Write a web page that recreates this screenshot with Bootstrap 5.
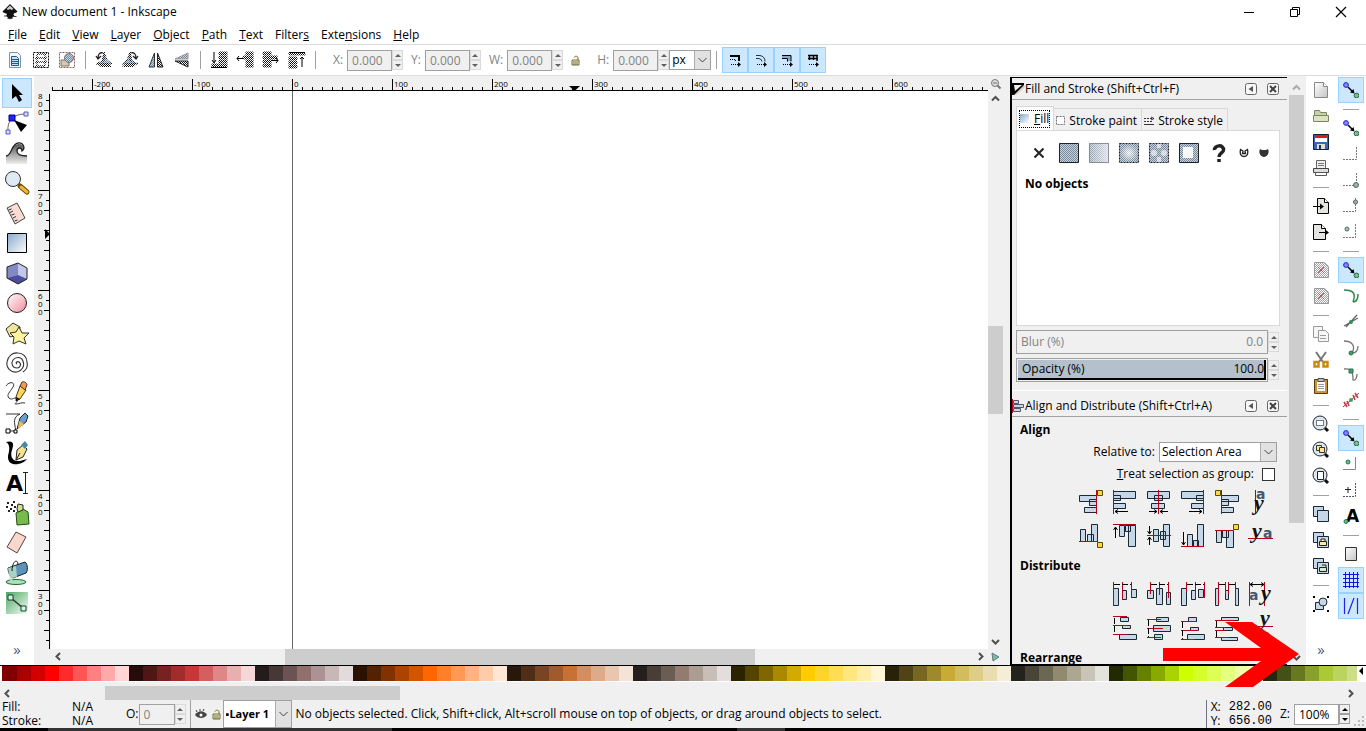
<!DOCTYPE html>
<html lang="en">
<head>
<meta charset="utf-8">
<meta name="viewport" content="width=device-width, initial-scale=1">
<title>New document 1 - Inkscape</title>
<link href="https://cdn.jsdelivr.net/npm/bootstrap@5.3.0/dist/css/bootstrap.min.css" rel="stylesheet">
<style>
  :root { --face: #f0f0f0; --edge: #a0a0a0; --thumb: #cdcdcd; --hot: #cce8ff; --hot-edge: #99d1ff; }
  body { font-family: "Open Sans", "Noto Sans", sans-serif; font-size: 12px; line-height: 16px; color: #000; background: #fff; }
  button { font: inherit; color: inherit; background: none; border: 0; padding: 0; }
  svg { display: block; flex: none; overflow: visible; }
  a { color: inherit; text-decoration: none; }
  .titlebar { height: 24px; padding-left: 2px; flex: none; }
  .win-controls { width: 134px; padding: 0 20px 0 12px; }
  .menus { height: 21px; gap: 12px; border-bottom: 1px solid #dcdcdc; padding-top: 1px; flex: none; }
  .toolbar-row { height: 31px; border-bottom: 1px solid #dcdcdc; padding-left: 2px; flex: none; }
  .tb { width: 26px; height: 26px; display: flex; align-items: center; justify-content: center; flex: none; }
  .tb.on, .tool.on { background: var(--hot); outline: 1px solid var(--hot-edge); outline-offset: -1px; }
  .vsep { width: 1px; height: 18px; background: var(--edge); margin: 0 5px; flex: none; }
  .hsep { height: 1px; width: 16px; background: var(--edge); margin: 6px 0 5px; flex: none; }
  .toolbox { width: 34px; flex: none; padding-top: 2px; }
  .tool { width: 30px; height: 30px; display: flex; align-items: center; justify-content: center; flex: none; }
  .num { width: 45px; height: 21px; border: 1px solid var(--edge); background: #fff; padding: 0 4px; font-size: 12px; line-height: 16px; border-radius: 0; color: #000; }
  .num:disabled { background: var(--face); color: #838383; }
  .num.opacity-field { width: 36px; }
  .spin { display: flex; flex-direction: column; width: 11px; flex: none; }
  .spin button { height: 10px; width: 11px; border: 1px solid #dadada; background: var(--face); display: flex; align-items: center; justify-content: center; }
  .spin button::before { content: ""; border: 3px solid transparent; border-top: 0; border-bottom: 3px solid #606060; }
  .spin button:last-child::before { transform: rotate(180deg); }
  .spin.live button { border-color: var(--edge); }
  .spin.live button::before { border-bottom-color: #000; }
  .dim { color: #838383; }
  .combo { appearance: none; border: 1px solid var(--edge); border-radius: 0; font-size: 12px; line-height: 16px; height: 20px; padding: 0 18px 0 2px; color: #000;
    background: #fff url("data:image/svg+xml,%3Csvg xmlns='http://www.w3.org/2000/svg' width='16' height='30'%3E%3Cpath fill='%23e1e1e1' stroke='%23adadad' d='M.5 -1h16v32h-16z'/%3E%3Cpath fill='none' stroke='%23444' d='M4.500 13l4 4 4-4'/%3E%3C/svg%3E") right center no-repeat; }
  .combo.units { width: 42px; }
  .combo.relative-to { width: 118px; }
  .combo.layer { width: 69px; height: 28px; font-size: 11px; }
  .workspace { min-height: 0; }
  .sheet { display: grid; grid-template: 15px minmax(0, 1fr) 16px / 17px minmax(0, 1fr) 15px; background: var(--face); min-width: 0; }
  .sheet text { font-size: 8px; }
  .sheet > svg { overflow: hidden; }
  .paper { background: #fff; overflow: hidden; }
  .page-edge { width: 242px; height: 100%; border-right: 1px solid #666; }
  .bar { display: flex; background: var(--face); }
  .bar-v { flex-direction: column; width: 15px; flex: none; }
  .bar button { width: 15px; height: 15px; flex: none; display: flex; align-items: center; justify-content: center; }
  .bar i { background: var(--thumb); }
  .dock { width: 303px; flex: none; background: var(--face); padding-left: 7px; gap: 2px; }
  .dock-panel { width: 277px; border: solid #000; border-width: 1px 0 1px 2px; overflow: hidden; margin-top: 1px; flex: none; }
  .dock-head { height: 22px; border-bottom: 1px solid var(--edge); padding: 1px 8px 0 0; gap: 10px; }
  .tabs { height: 22px; padding-left: 4px; }
  .tabs button { border: 1px solid #d9d9d9; border-bottom: 0; border-left: 0; height: 22px; display: flex; align-items: center; gap: 4px; padding: 2px 4px 0 2px; }
  .tabs .active { background: #fff; height: 24px; border-left: 1px solid #d9d9d9; padding: 0 4px 0 3px; }
  .focus-dots { outline: 1px dotted #000; }
  .tab-page { background: #fff; border: 1px solid #d9d9d9; height: 196px; margin: 0 7px 0 4px; }
  .paints { padding: 7px 0 0 7px; }
  .paint { width: 30px; height: 30px; display: flex; align-items: center; justify-content: center; }
  .paint.slim { width: 20px; }
  .meter-row { margin: 4px 8px 0 4px; }
  .meter { border: 1px solid var(--edge); height: 24px; flex: 1; display: flex; align-items: center; justify-content: space-between; }
  .meter.full { padding: 1px; }
  .meter.full > div { background: #b4c0cb; border: solid #000; border-width: 0 2px 2px 0; height: 20px; }
  .meter input { width: 50px; text-align: right; border: 0; background: none; padding: 0; font-size: 12px; color: inherit; }
  .form-line { height: 22px; padding-right: 10px; }
  .form-line.tick-line { padding-right: 12px; }
  .grid-btns { display: grid; grid-template-columns: repeat(6, 34px); justify-content: end; padding-right: 10px; }
  .grid-btns button { height: 34px; display: flex; align-items: center; justify-content: center; }
  .grid-btns.five { grid-template-columns: repeat(5, 34px); }
  .section-name { font-weight: 700; padding: 5px 0 3px 8px; }
  .tick-box { appearance: none; width: 13px; height: 13px; border: 1px solid #333; background: #fff; }
  .o { fill: #c6d8e8; stroke: #1b2733; }
  .r { stroke: #b8001c; fill: none; }
  .k { stroke: #000; fill: none; }
  .y { fill: #ffd83a; stroke: #5c4a00; }
  .ay { font: bold 14px "DejaVu Sans"; fill: #44586c; }
  .yy { font: italic bold 22px "Liberation Serif"; fill: #111; }
  .commands { width: 31px; flex: none; padding: 1px 3px 0 2px; }
  .snaps { width: 29px; flex: none; padding: 1px 2px 0 1px; }
  .chev { color: #555a80; font-size: 15px; }
  .palette { height: 17px; border-top: 1px solid #000; overflow: hidden; padding-left: 2px; background: #fff; }
  .palette button { width: 14px; height: 15px; flex: none; }
  .palette button:first-child { width: 15px; }
  .palette-bar { height: 18px; padding: 4px 8px 0 0; }
  .status { height: 28px; background: var(--face); padding-left: 2px; }
  .fs-rows { line-height: 14px; }
  .fs-name { width: 70px; }
  .fs-value { width: 54px; }
  .task-edge { height: 3px; background: #000; }
  .task-edge i { background: #333; }
  .mono { font-family: "Liberation Mono", monospace; font-size: 12px; }
  .pointer-arrow { position: absolute; right: 67px; bottom: 44px; pointer-events: none; }
</style>
</head>
<body class="vh-100 overflow-hidden d-flex flex-column position-relative">

<!-- shared patterns and symbols -->
<svg width="0" height="0" class="position-absolute" aria-hidden="true">
  <defs>
    <pattern id="ck" width="2" height="2" patternUnits="userSpaceOnUse"><path d="M0 0h1v1H0zM1 1h1v1H1z" fill="#111"/></pattern>
    <pattern id="ckb" width="2" height="2" patternUnits="userSpaceOnUse"><path fill="#c6d3e0" d="M0 0h2v2H0z"/><path d="M0 0h1v1H0zM1 1h1v1H1z" fill="#78879a"/></pattern>
    <pattern id="ckl" width="2" height="2" patternUnits="userSpaceOnUse"><path fill="#fff" d="M0 0h2v2H0z"/><path d="M0 0h1v1H0zM1 1h1v1H1z" fill="#a3a3a3"/></pattern>
    <pattern id="hticks" x="1" width="10" height="15" patternUnits="userSpaceOnUse"><path d="M0 11h1v4H0z"/></pattern>
    <pattern id="hmajor" x="41" width="100" height="15" patternUnits="userSpaceOnUse"><path d="M0 3h1v12H0z"/></pattern>
    <pattern id="vticks" y="9" width="17" height="20" patternUnits="userSpaceOnUse"><path d="M12 0h4v1h-4zM10 10h6v1h-6z"/></pattern>
    <pattern id="vmajor" y="99" width="17" height="100" patternUnits="userSpaceOnUse"><path d="M4 0h12v1H4z"/></pattern>
    <linearGradient id="gb" x2="1" y2="1"><stop stop-color="#86a9c9"/><stop offset="1" stop-color="#fff"/></linearGradient>
    <linearGradient id="gg" x2="1" y2="1"><stop stop-color="#fff"/><stop offset="1" stop-color="#c4c4c4"/></linearGradient>
    <linearGradient id="gr" x2="1" y2="1"><stop stop-color="#fff"/><stop offset="1" stop-color="#f28a9b"/></linearGradient>
    <linearGradient id="gn" x2="1" y2="1"><stop stop-color="#4fa766"/><stop offset="1" stop-color="#f2fff4"/></linearGradient>
    <linearGradient id="gt" x2="0" y2="1"><stop stop-color="#555"/><stop offset="1" stop-color="#eee"/></linearGradient>
    <linearGradient id="fade" x2="1"><stop stop-color="#fff" stop-opacity="0.200"/><stop offset="1" stop-color="#fff" stop-opacity=".7"/></linearGradient>
    <radialGradient id="glow"><stop stop-color="#fff" stop-opacity=".8"/><stop offset="1" stop-color="#fff" stop-opacity="0"/></radialGradient>
  </defs>
  <symbol id="nodes" viewBox="0 0 16 16"><circle cx="3" cy="3" r="2.400" fill="#88f" stroke="#22c"/><circle cx="13.500" cy="13.500" r="2.400" fill="#7b9" stroke="#286b40"/><path d="M5 5l4.500 4.500" stroke="#000" stroke-width="1.500"/><path d="M11.500 11.500l-1-4.500-3.500 3.500z"/></symbol>
  <symbol id="lock" viewBox="0 0 12 12"><path d="M2 6h7v5H2zM4 3.500c1-2 4-1.500 4 .500v2" fill="#fff7c9" stroke="#6b683f"/><path d="M3 8h5M3 10h5" stroke="#6b683f"/></symbol>
  <symbol id="lens" viewBox="0 0 18 18"><path d="M13 13l3 3" stroke="#111" stroke-width="3"/><circle cx="8" cy="8" r="7" fill="#dce8f3" stroke="#222"/></symbol>
  <symbol id="arr-l" viewBox="0 0 9 9"><path d="M6 1L2.500 4.500 6 8" fill="none" stroke="#505050" stroke-width="2"/></symbol>
  <symbol id="arr-r" viewBox="0 0 9 9"><path d="M3 1l3.500 3.500L3 8" fill="none" stroke="#505050" stroke-width="2"/></symbol>
  <symbol id="arr-u" viewBox="0 0 9 9"><path d="M1 6.500L4.500 3 8 6.500" fill="none" stroke="currentColor" stroke-width="2"/></symbol>
  <symbol id="arr-d" viewBox="0 0 9 9"><path d="M1 3l3.500 3.500L8 3" fill="none" stroke="#505050" stroke-width="2"/></symbol>
  <symbol id="iconify" viewBox="0 0 12 12"><rect x=".5" y=".5" width="11" height="11" rx="2" fill="#f7f7f7" stroke="#666"/><path d="M8 3v6L3.500 6z" fill="#555"/></symbol>
  <symbol id="close" viewBox="0 0 12 12"><rect x=".5" y=".5" width="11" height="11" rx="2" fill="#f7f7f7" stroke="#666"/><path d="M3 3l6 6M9 3l-6 6" stroke="#444" stroke-width="2"/></symbol>
  <symbol id="docx" viewBox="0 0 16 16"><path d="M1.500 .5h10l4 4v11h-14z" fill="url(#ckl)" stroke="#999"/><path d="M5 5l6 6M11 5l-6 6" stroke="#b35560"/></symbol>
</svg>

<header class="titlebar d-flex align-items-center">
  <svg width="16" height="16" viewBox="0 0 16 16"><path d="M8 0l7.500 7.500c-1 2-4 1-4 3l1 1.500-4.500 3.500L4 12l1-2C4 9 1 9 .5 7.500z" fill="#111"/><path d="M8 1.500l3.500 3.500-2 1-1.500-1-2 1-1.500-1z" fill="#c7ced5"/><path d="M2 12h2M11.500 12.500h3M5.500 14.500h5" stroke="#444"/></svg>
  <span class="ms-1">New document 1 - Inkscape</span>
  <div class="win-controls ms-auto d-flex justify-content-between">
    <button aria-label="Minimize"><svg width="10" height="10"><path d="M0 5.500h10" stroke="#000"/></svg></button>
    <button aria-label="Restore"><svg width="10" height="10" fill="none" stroke="#000"><path d="M.5 2.500h7v7h-7zM2.500 2V.5h7v7H8"/></svg></button>
    <button aria-label="Close"><svg width="10" height="10"><path d="M0 0l10 10M10 0L0 10" stroke="#000" stroke-width="1.200"/></svg></button>
  </div>
</header>

<nav class="menus d-flex align-items-center ps-2">
  <a href="#"><u>F</u>ile</a><a href="#"><u>E</u>dit</a><a href="#"><u>V</u>iew</a><a href="#"><u>L</u>ayer</a><a href="#"><u>O</u>bject</a><a href="#"><u>P</u>ath</a><a href="#"><u>T</u>ext</a><a href="#">Filter<u>s</u></a><a href="#">Exte<u>n</u>sions</a><a href="#"><u>H</u>elp</a>
</nav>

<div class="toolbar-row d-flex align-items-center" role="toolbar">
  <div class="d-flex align-items-center">
    <button class="tb" aria-label="Select all"><svg width="16" height="18" viewBox="0 0 16 18"><path d="M2.500 1.500h8l3 3v12h-11z" fill="#f4f8fb" stroke="#7d95a8"/><path d="M4.500 5.500h5l2 2v7h-7z" fill="#cfe0ee" stroke="#1f5a8a"/><path d="M5 8.500h6M5 10.500h6M5 12.500h6" stroke="#1f5a8a"/></svg></button>
    <button class="tb" aria-label="Select all in all layers"><svg width="18" height="18" viewBox="0 0 18 18"><rect x="1.500" y="1.500" width="15" height="15" fill="none" stroke="#000" stroke-dasharray="2 1"/><path d="M6 3h8l-2 4H4zM6 7h8l-2 4H4zM6 11h8l-2 4H4z" fill="#fff" stroke="url(#ck)" stroke-width="1.500"/></svg></button>
    <button class="tb" aria-label="Deselect"><svg width="18" height="18" viewBox="0 0 18 18"><rect x="1.500" y="1.500" width="15" height="15" fill="none" stroke="#8a6060" stroke-dasharray="2 1"/><path d="M3 9h8v6H3z" fill="#d8c9a8" stroke="#776"/><circle cx="11" cy="7" r="4.500" fill="url(#ckb)" stroke="#678"/></svg></button>
  </div>
  <span class="vsep"></span>
  <div class="d-flex">
    <button class="tb" aria-label="Rotate left"><svg width="18" height="18" viewBox="0 0 18 18"><path d="M9 1v9H7zM9 1l3 8 5 4H1l8-4z" fill="url(#ckb)" stroke="url(#ck)"/><path d="M1 12h12l4 4H6z" fill="url(#ck)"/><path d="M8 2C5 1 3 3 3 7M1 5l2 3 3-3" fill="none" stroke="#222" stroke-width="1.300"/></svg></button>
    <button class="tb" aria-label="Rotate right"><svg width="18" height="18" viewBox="0 0 18 18"><path d="M9 1v9h2zM9 1L6 9l-5 4h16L9 9z" fill="url(#ckb)" stroke="url(#ck)"/><path d="M17 12H5l-4 4h11z" fill="url(#ck)"/><path d="M10 2c3-1 5 1 5 5M17 5l-2 3-3-3" fill="none" stroke="#222" stroke-width="1.300"/></svg></button>
    <button class="tb" aria-label="Flip horizontal"><svg width="18" height="18" viewBox="0 0 18 18"><path d="M7.500 2v14H2z" fill="url(#ckb)" stroke="#333"/><path d="M10.500 2v14H16z" fill="url(#ck)" stroke="#222"/></svg></button>
    <button class="tb" aria-label="Flip vertical"><svg width="18" height="18" viewBox="0 0 18 18"><path d="M15 2v6H2z" fill="url(#ckb)" stroke="#999"/><path d="M15 16v-6H2z" fill="url(#ck)" stroke="#222"/></svg></button>
  </div>
  <span class="vsep"></span>
  <div class="d-flex">
    <button class="tb" aria-label="Lower to bottom"><svg width="18" height="18" viewBox="0 0 18 18"><path d="M9 1h8v3H9zM9 5h8v3H9zM9 9h8v3H9zM2 13h15v3H2z" fill="url(#ck)" stroke="url(#ck)"/><path d="M4 1v10M2 9l2 3 2-3M1 16.500h16" class="k"/></svg></button>
    <button class="tb" aria-label="Lower"><svg width="18" height="18" viewBox="0 0 18 18"><path d="M10 1h7v3h-7zM7 5h10v3H7zM10 9h7v3h-7zM10 13h7v3h-7z" fill="url(#ck)" stroke="url(#ck)"/><path d="M1 7.500h6M3 5L1 7.500 3 10" class="k"/></svg></button>
    <button class="tb" aria-label="Raise"><svg width="18" height="18" viewBox="0 0 18 18"><path d="M1 1h8v3H1zM1 5h14v3H1zM1 9h8v3H1zM1 13h8v3H1z" fill="url(#ck)" stroke="url(#ck)"/><path d="M9 9.500h7M14 7l2 2.500-2 2.500" class="k"/></svg></button>
    <button class="tb" aria-label="Raise to top"><svg width="18" height="18" viewBox="0 0 18 18"><path d="M1 2h16v2H1zM1 6h8v3H1zM1 10h8v3H1zM1 14h8v3H1z" fill="url(#ck)" stroke="url(#ck)"/><path d="M14 16V6M12 8l2-2 2 2M1 1.500h16" class="k"/></svg></button>
  </div>
  <span class="vsep"></span>
  <div class="d-flex align-items-center ms-2 ps-1">
    <label for="fx" class="dim me-1">X:</label><input id="fx" class="num" value="0.000" disabled><span class="spin"><button aria-label="Up"></button><button aria-label="Down"></button></span>
    <label for="fy" class="dim ms-2 me-1">Y:</label><input id="fy" class="num" value="0.000" disabled><span class="spin"><button aria-label="Up"></button><button aria-label="Down"></button></span>
    <label for="fw" class="dim ms-1 me-1 ps-1">W:</label><input id="fw" class="num" value="0.000" disabled><span class="spin"><button aria-label="Up"></button><button aria-label="Down"></button></span>
    <button class="tb" aria-label="Lock ratio"><svg width="12" height="12"><use href="#lock"/></svg></button>
    <label for="fh" class="dim ms-2 me-1">H:</label><input id="fh" class="num" value="0.000" disabled><span class="spin"><button aria-label="Up"></button><button aria-label="Down"></button></span>
    <select class="combo units" aria-label="Units"><option>px</option></select>
  </div>
  <span class="vsep"></span>
  <div class="d-flex">
    <button class="tb on" aria-label="Scale stroke"><svg width="14" height="14" viewBox="0 0 14 14"><path d="M2 3h9v5" fill="none" stroke="#000" stroke-width="2"/><path d="M2 6.500h5.500v2M3 11.500h7" class="k" stroke-dasharray="1 1"/><path d="M10 9l3 2.500-3 2.500z"/></svg></button>
    <button class="tb on" aria-label="Scale corners"><svg width="14" height="14" viewBox="0 0 14 14"><path d="M2 2.500h4q5 1 5 6M2 5.500h3q3 1 3 3" fill="none" stroke="#234"/><path d="M3 11.500h7" class="k" stroke-dasharray="1 1"/><path d="M10 9l3 2.500-3 2.500z"/></svg></button>
    <button class="tb on" aria-label="Move gradients"><svg width="14" height="14" viewBox="0 0 14 14"><path d="M2 2h9v6H8V5H2z" fill="#8fa9c0"/><path d="M2 2.500h9v6M2 5.500h5.500v3" class="k"/><path d="M3 11.500h7" class="k" stroke-dasharray="1 1"/><path d="M10 9l3 2.500-3 2.500z"/></svg></button>
    <button class="tb on" aria-label="Move patterns"><svg width="14" height="14" viewBox="0 0 14 14"><path d="M2 2.500h10M2 5.500h10M3.500 2v5M7.500 2v5M11 2v6" fill="none" stroke="#000" stroke-width="1.500"/><path d="M3 11.500h7" class="k" stroke-dasharray="1 1"/><path d="M10 9l3 2.500-3 2.500z"/></svg></button>
  </div>
</div>

<main class="workspace d-flex flex-grow-1">
  <div class="toolbox d-flex flex-column align-items-center overflow-hidden" role="toolbar">
    <button class="tool on" aria-label="Selector"><svg width="24" height="24" viewBox="0 0 24 24"><path d="M7 3v15l4-3 3 6 3-2-3-5h4z"/></svg></button>
    <button class="tool" aria-label="Node"><svg width="24" height="24" viewBox="0 0 24 24"><path d="M3 20C2 10 8 3 20 3" fill="none" stroke="#666"/><path d="M1 19h4v4H1zM19 1h4v4h-4z" fill="#dde" stroke="#55c"/><path d="M4 4h6v6H4z" fill="#22f" stroke="#009"/><path d="M9 9l13 5-6 7z"/></svg></button>
    <button class="tool" aria-label="Tweak"><svg width="24" height="24" viewBox="0 0 24 24"><path d="M1 15c6 0 5-12 13-12 5 0 6 5 3 7 0-4-5-4-5 0 0 3 4 5 10 5v8H1z" fill="url(#gt)"/><path d="M1 15c6 0 5-12 12-13 5-1 8 5 4 8 0-4-5-4-5 0 0 3 4 5 10 5" fill="none" stroke="#222" stroke-width="1.300"/></svg></button>
    <button class="tool" aria-label="Zoom"><svg width="24" height="24" viewBox="0 0 24 24"><path d="M15 15l7 6" stroke="#6b4a00" stroke-width="5" stroke-linecap="round"/><path d="M16 16l6 5" stroke="#f0b63c" stroke-width="3" stroke-linecap="round"/><circle cx="8" cy="8" r="7.500" fill="#dfeaf4" stroke="#333"/></svg></button>
    <button class="tool" aria-label="Measure"><svg width="24" height="24" viewBox="0 0 24 24"><path d="M2 7l10-5 8 15-10 6z" fill="#fadcd3" stroke="#444"/><path d="M3.500 9l3-1M5 11.500l3-1.500M6.500 14l3-1M8 17l3-1.500M9.500 20l3-1" stroke="#333"/></svg></button>
    <button class="tool" aria-label="Rectangle"><svg width="22" height="22" viewBox="0 0 22 22"><path d="M1.500 1.500h19v19h-19z" fill="url(#gb)" stroke="#000"/></svg></button>
    <button class="tool" aria-label="3D box"><svg width="24" height="24" viewBox="0 0 24 24"><path d="M2 6l11-4 9 5v11l-9 5L2 17z" fill="#c3c6ea"/><path d="M2 6l11-4v12L2 17z" fill="#8488c4"/><path d="M13 14l9 4-9 5-11-6z" fill="#4a4e9c"/><path d="M2 6l11-4 9 5v11l-9 5L2 17z" fill="none" stroke="#222"/></svg></button>
    <button class="tool" aria-label="Ellipse"><svg width="24" height="24" viewBox="0 0 24 24"><circle cx="12" cy="12" r="9.500" fill="url(#gr)" stroke="#222"/></svg></button>
    <button class="tool" aria-label="Star"><svg width="24" height="24" viewBox="0 0 24 24"><path d="M1 8l7-6 7 4-1 8-9 2z" fill="#eee79a" stroke="#333"/><path d="M14 6l3 6 7 0-5 5 2 6-7-3-6 3 1-7-4-4 6-1z" fill="#fdf39b" stroke="#333"/></svg></button>
    <button class="tool" aria-label="Spiral"><svg width="24" height="24" viewBox="0 0 24 24"><path d="M12 13c-2-1 0-3 2-2 3 2 1 6-2 6-5 0-6-5-4-8 3-4 9-3 10 1 2 5-1 10-6 11-6 1-11-4-10-10C3 5 8 1 13 2c5 0 9 4 9 9 1 4-1 8-4 10" fill="none" stroke="#333" stroke-width="1.100"/></svg></button>
    <button class="tool" aria-label="Pencil"><svg width="24" height="24" viewBox="0 0 24 24"><path d="M11 16l4-11 6 4-6 9-4 2z" fill="#fbd84f" stroke="#433"/><path d="M15 5l2-4c2-1 5 1 5 3l-2 5z" fill="#f29a4a" stroke="#433"/><path d="M11 16l4 2-4 2z"/><path d="M1 5c3-5 10-4 7 1S1 14 4 17s6-2 8 1-4 5-1 5 6-2 9-1" fill="none" stroke="#333"/></svg></button>
    <button class="tool" aria-label="Bezier"><svg width="24" height="24" viewBox="0 0 24 24"><path d="M1 3h14C8 6 9 11 11 20H4" fill="none" stroke="#333"/><path d="M1 18h4v4H1zM9 19h3v3H9z" fill="#fff" stroke="#000"/><path d="M12 18l3-11 5-5 3 3-2 6z" fill="#6f9fc8" stroke="#223"/><path d="M14 10l5 3-6 5z" fill="#edbb55"/></svg></button>
    <button class="tool" aria-label="Calligraphy"><svg width="24" height="24" viewBox="0 0 24 24"><path d="M1 1c8-2 8 2 6 8s0 12 8 11l7-2c-4 6-20 9-19-3C4 10 6 4 1 1z"/><path d="M11 19l1-10 6-5 4 4-4 8z" fill="#f5e38e" stroke="#222"/><path d="M16 4l4-4 3 4-3 4z" fill="#48a"/><path d="M11 19l4-7" stroke="#222"/></svg></button>
    <button class="tool" aria-label="Text"><svg width="24" height="24" viewBox="0 0 24 24"><text x="1" y="20" style="font:bold 22px 'DejaVu Sans'">A</text><path d="M18 1.500h5M18 22.500h5M20.500 2v20" stroke="#222"/></svg></button>
    <button class="tool" aria-label="Spray"><svg width="24" height="24" viewBox="0 0 24 24"><path d="M11 12l7-4 5 3 1 12-12 1z" fill="#77bb4c" stroke="#254d14"/><path d="M12 8l1-5 5 1v5l-5 2z" fill="#cfe28e" stroke="#222"/><path d="M2 2h2M6 4h2M1 6h2M5 8h2M8 1h2M9 6h2M3 10h2M8 10h2" stroke="#222" stroke-width="2"/></svg></button>
    <button class="tool" aria-label="Eraser"><svg width="24" height="24" viewBox="0 0 24 24"><path d="M11 1l10 5-9 16-10-6z" fill="#f9d8cc" stroke="#544"/></svg></button>
    <button class="tool" aria-label="Bucket"><svg width="24" height="24" viewBox="0 0 24 24"><ellipse cx="11" cy="21" rx="10" ry="2.500" fill="#a9e2bd" stroke="#263"/><path d="M3 7l17-6c3 2 3 9 1 11l-13 5c-3-1-5-6-5-10z" fill="#5b94b8" stroke="#123"/><path d="M3 7l8-2 1 11-4 1-1 4H5z" fill="#bde0c8" opacity=".8"/><path d="M7 10c0-9 5-13 6-7" fill="none" stroke="#111"/></svg></button>
    <button class="tool" aria-label="Gradient"><svg width="24" height="24" viewBox="0 0 24 24"><path d="M1 1h22v22H1z" fill="url(#gn)"/><path d="M6 7l12 10" stroke="#333" stroke-width="1.500"/><path d="M3 4h5v5H3zM16 15h5v5h-5z" fill="#bfd" stroke="#333"/></svg></button>
    <button class="chev mt-auto mb-1 pb-1" aria-label="More tools">»</button>
  </div>

  <section class="sheet flex-grow-1">
    <span></span>
    <svg class="w-100" height="15"><rect width="99.650%" height="15" fill="url(#hticks)"/><rect width="99%" height="15" fill="url(#hmajor)"/><path d="M1 14.500h3000" stroke="#000"/><path d="M518 10h11l-5.500 5z"/><g id="hlabels"></g></svg>
    <svg width="15" height="15" viewBox="0 0 15 15"><circle cx="7" cy="7" r="3.500" fill="#ddd" stroke="#777"/><path d="M9.500 9.500l3 3" stroke="#777" stroke-width="2"/><path d="M5 7h4" stroke="#777"/></svg>
    <svg width="17" class="h-100"><rect y="3" width="17" height="99.200%" fill="url(#vticks)"/><rect width="17" height="99%" fill="url(#vmajor)"/><path d="M15.500 3v3000" stroke="#000"/><path d="M11 138v10l5-5z"/><g id="vlabels"></g></svg>
    <div class="paper"><div class="page-edge"></div></div>
    <div class="bar bar-v"><button aria-label="Scroll up"><svg width="9" height="9" color="#505050"><use href="#arr-u"/></svg></button><span style="flex:219"></span><i style="flex:88"></i><span style="flex:219"></span><button aria-label="Scroll down"><svg width="9" height="9"><use href="#arr-d"/></svg></button></div>
    <span></span>
    <div class="bar"><button aria-label="Scroll left"><svg width="9" height="9"><use href="#arr-l"/></svg></button><span style="flex:219"></span><i style="flex:470"></i><span style="flex:218"></span><button aria-label="Scroll right"><svg width="9" height="9"><use href="#arr-r"/></svg></button></div>
    <svg width="15" height="15" viewBox="0 0 15 15"><path d="M4 4l7 4-6 4z" fill="#7bbd96" stroke="#678"/></svg>
  </section>

  <aside class="dock d-flex">
    <div class="dock-panel">
      <div class="dock-head d-flex align-items-center">
        <div class="d-flex align-items-center flex-grow-1"><svg width="13" height="14" viewBox="0 0 13 14"><path d="M0 1h12v3L3 13H0z"/><path d="M2 3h8L3 9z" fill="#eee"/><path d="M12 3l1 2-9 8-2 0z" fill="#dcb"/></svg>
        <span>Fill and Stroke (Shift+Ctrl+F)</span></div>
        <button aria-label="Iconify Fill and Stroke"><svg width="12" height="12"><use href="#iconify"/></svg></button><button aria-label="Close Fill and Stroke"><svg width="12" height="12"><use href="#close"/></svg></button>
      </div>
      <div class="tabs d-flex align-items-end mt-2" role="tablist">
        <button class="active" role="tab"><span class="focus-dots d-flex align-items-center gap-1"><svg width="10" height="12"><path d="M0 1h9v9H0z" fill="url(#gb)"/></svg><span><u>F</u>ill</span></span></button>
        <button role="tab"><svg width="9" height="10"><path d="M.5.5h8v8h-8z" fill="#fff" stroke="#777" stroke-dasharray="2 1"/></svg>Stroke paint</button>
        <button role="tab"><svg width="10" height="10"><path d="M0 2.500h10M0 5.500h8" stroke="#333" stroke-dasharray="2 1"/><path d="M0 8.500h10M7 1l3 1.500L7 4" stroke="#333" fill="none"/></svg>Stroke style</button>
      </div>
      <div class="tab-page">
        <div class="d-flex paints">
          <button class="paint" aria-label="No paint"><svg width="12" height="12"><path d="M1.500 1.500l9 9M10.500 1.500l-9 9" stroke="#222" stroke-width="2"/></svg></button>
          <button class="paint" aria-label="Flat color"><svg width="20" height="20"><path d="M.5.5h19v19H.5z" fill="url(#ckb)" stroke="#222"/></svg></button>
          <button class="paint" aria-label="Linear gradient"><svg width="20" height="20"><path d="M.5.5h19v19H.5z" fill="url(#ckb)"/><path d="M1 1h18v18H1z" fill="url(#fade)"/><path d="M.5.5h19v19H.5z" fill="none" stroke="#444" stroke-dasharray="1 1"/></svg></button>
          <button class="paint" aria-label="Radial gradient"><svg width="20" height="20"><path d="M.5.5h19v19H.5z" fill="url(#ckb)" stroke="#222" stroke-dasharray="2 1"/><circle cx="10" cy="10" r="9" fill="url(#glow)"/></svg></button>
          <button class="paint" aria-label="Pattern"><svg width="20" height="20"><path d="M.5.5h19v19H.5z" fill="url(#ckb)" stroke="#222" stroke-dasharray="2 1"/><g fill="#fff" opacity=".6"><circle cx="5" cy="10" r="3"/><circle cx="15" cy="10" r="3"/><path d="M8 1h4v4H8zM8 14h4v5H8z"/></g></svg></button>
          <button class="paint" aria-label="Swatch"><svg width="20" height="20"><path d="M.5.5h19v19H.5z" fill="url(#ckb)" stroke="#222"/><path d="M4 4h10v11H4z" fill="#f6f8fa"/></svg></button>
          <button class="paint" aria-label="Unknown"><svg width="16" height="20"><path d="M3.500 7c-.5-5 9.500-6 9 0 0 3-4.500 3-4.500 7M8 16v3" fill="none" stroke="#222" stroke-width="3.500"/></svg></button>
          <button class="paint slim" aria-label="Even-odd"><svg width="10" height="10"><path d="M1.500 1.500L4 3l-.5 2.500h3L6 3l2.500-1.500c1 4 0 7-3.500 7S.5 5.500 1.500 1.500z" fill="none" stroke="#222" stroke-width="1.300"/></svg></button>
          <button class="paint slim" aria-label="Nonzero"><svg width="10" height="10"><path d="M1 1l2 1h4l2-1c2 4-1 8-4 8S-1 5 1 1z" fill="#333"/></svg></button>
        </div>
        <div class="section-name ps-2 pt-2">No objects</div>
      </div>
      <div class="d-flex align-items-center meter-row">
        <div class="meter dim px-1"><label for="blur">Blur (%)</label><input id="blur" value="0.0" disabled></div><span class="spin"><button aria-label="Up"></button><button aria-label="Down"></button></span>
      </div>
      <div class="d-flex align-items-center meter-row">
        <div class="meter full"><div class="d-flex flex-grow-1 align-items-center justify-content-between ps-1"><label for="opac">Opacity (%)</label><input id="opac" value="100.0"></div></div><span class="spin"><button aria-label="Up"></button><button aria-label="Down"></button></span>
      </div>
      <div class="mt-2 mb-1 border-top border-white"></div>
      <div class="dock-head d-flex align-items-center">
        <div class="d-flex align-items-center flex-grow-1"><svg width="13" height="14" viewBox="0 0 13 14"><path class="r" d="M.5 0v14"/><path d="M1.500 1.500h5v3h-5zM1.500 5.500h10v3h-10zM1.500 9.500h7v3h-7z" fill="#c6d8e8" stroke="#556"/></svg>
        <span>Align and Distribute (Shift+Ctrl+A)</span></div>
        <button aria-label="Iconify Align"><svg width="12" height="12"><use href="#iconify"/></svg></button><button aria-label="Close Align"><svg width="12" height="12"><use href="#close"/></svg></button>
      </div>
      <div class="section-name">Align</div>
      <div class="d-flex align-items-center justify-content-end form-line"><label for="rel" class="me-1">Relative to:</label><select id="rel" class="combo relative-to"><option>Selection Area</option></select></div>
      <div class="d-flex align-items-center justify-content-end form-line tick-line"><label for="grp" class="me-2"><u>T</u>reat selection as group:</label><input id="grp" type="checkbox" class="tick-box"></div>
      <div class="grid-btns">
        <button aria-label="Right to anchor left"><svg width="25" height="25"><path class="o" d="M1.500 5.500h17v6h-17zM11.500 9.500h7v6h-7zM6.500 17.500h12v5h-12z"/><path class="r" d="M18.500 0v24"/><path class="y" d="M19.500.5h5v5h-5z"/></svg></button>
        <button aria-label="Left edges"><svg width="25" height="25"><path class="o" d="M1.500 1.500h22v7h-22zM1.500 5.500h7v5h-7zM1.500 13.500h12v5h-12z"/><path class="r" d="M1.500 0v24"/><path class="k" d="M3 21.500h13M6 19.500l-3 2 3 2"/></svg></button>
        <button aria-label="Center vertical axis"><svg width="25" height="25"><path class="o" d="M1.500 1.500h22v7h-22zM8.500 5.500h8v5h-8zM5.500 13.500h13v5h-13z"/><path class="r" d="M12.500 0v24"/><path class="k" d="M3 21.500h8M22 21.500h-8M8 19.500l3 2-3 2M17 19.500l-3 2 3 2"/></svg></button>
        <button aria-label="Right edges"><svg width="25" height="25"><path class="o" d="M1.500 1.500h22v7h-22zM16.500 5.500h7v5h-7zM11.500 13.500h12v5h-12z"/><path class="r" d="M23.500 0v24"/><path class="k" d="M9 21.500h13M19 19.500l3 2-3 2"/></svg></button>
        <button aria-label="Left to anchor right"><svg width="25" height="25"><path class="o" d="M7.500 5.500h17v6h-17zM7.500 9.500h7v6h-7zM7.500 17.500h12v5h-12z"/><path class="r" d="M7.500 0v24"/><path class="y" d="M1.500.5h5v5h-5z"/></svg></button>
        <button aria-label="Text anchors vertical"><svg width="25" height="25"><path class="r" d="M7.500 0v24"/><text class="ay" x="8" y="9">a</text><text class="yy" x="6" y="20">y</text></svg></button>
        <button aria-label="Bottom to anchor top"><svg width="25" height="25"><path class="o" d="M2.500 5.500h5v12h-5zM9.500 10.500h6v7h-6zM13.500.5h6v17h-6z"/><path class="r" d="M1 17.500h19"/><path class="y" d="M19.500 18.500h5v5h-5z"/></svg></button>
        <button aria-label="Top edges"><svg width="25" height="25"><path class="o" d="M7.500 1.500h5v11h-5zM13.500 1.500h5v6h-5zM16.500 1.500h7v21h-7z"/><path class="r" d="M1 .5h23"/><path class="k" d="M3.500 14V3M1.500 6l2-3 2 3"/></svg></button>
        <button aria-label="Center horizontal axis"><svg width="25" height="25"><path class="o" d="M7.500 5.500h5v12h-5zM14.500 7.500h5v8h-5zM17.500.5h6v22h-6z"/><path class="r" d="M1 11.500h24"/><path class="k" d="M3.500 2v8M3.500 21v-8M1.500 7l2 3 2-3M1.500 16l2-3 2 3"/></svg></button>
        <button aria-label="Bottom edges"><svg width="25" height="25"><path class="o" d="M7.500 10.500h5v12h-5zM13.500 16.500h5v6h-5zM17.500.5h6v22h-6z"/><path class="r" d="M1 22.500h23"/><path class="k" d="M3.500 8v13M1.500 18l2 3 2-3"/></svg></button>
        <button aria-label="Top to anchor bottom"><svg width="25" height="25"><path class="o" d="M2.500 6.500h5v12h-5zM8.500 6.500h6v7h-6zM12.500 6.500h7v17h-7z"/><path class="r" d="M1 6.500h18"/><path class="y" d="M19.500.5h5v5h-5z"/></svg></button>
        <button aria-label="Text baselines"><svg width="25" height="25"><path class="r" d="M0 14.500h25"/><text class="yy" x="4" y="14">y</text><text class="ay" x="15" y="14">a</text></svg></button>
      </div>
      <div class="section-name">Distribute</div>
      <div class="grid-btns five">
        <button aria-label="Distribute left edges"><svg width="25" height="25"><path class="o" d="M1.500 6.500h5v17h-5zM10.500 8.500h4v9h-4zM19.500 7.500h5v8h-5z"/><path class="r" d="M1.500 0v24M10.500 0v18M19.500 0v16"/><path class="k" d="M2 2.500h17" stroke-dasharray="6 2"/></svg></button>
        <button aria-label="Distribute centers"><svg width="25" height="25"><path class="o" d="M1.500 8.500h6v8h-6zM10.500 6.500h6v16h-6zM20.500 10.500h4v12h-4z"/><path class="r" d="M4.500 0v12M13.500 0v13M22.500 0v16"/><path class="k" d="M5 2.500h17" stroke-dasharray="6 2"/></svg></button>
        <button aria-label="Distribute right edges"><svg width="25" height="25"><path class="o" d="M1.500 6.500h5v17h-5zM11.500 8.500h4v9h-4zM18.500 7.500h5v8h-5z"/><path class="r" d="M6.500 0v10M15.500 0v16M24.500 0v16"/><path class="k" d="M7 2.500h17" stroke-dasharray="6 2"/></svg></button>
        <button aria-label="Equal horizontal gaps"><svg width="25" height="25"><path class="o" d="M1.500 6.500h3v17h-3zM11.500 8.500h3v9h-3zM21.500 6.500h3v17h-3z"/><path class="r" d="M4.500 0v22M11.500 0v12M14.500 0v12M21.500 0v22"/><path class="k" d="M5 2.500h6M15 2.500h6"/></svg></button>
        <button aria-label="Distribute text horizontally"><svg width="25" height="25"><path class="r" d="M1.500 0v24M16.500 0v24"/><path class="k" d="M2 2.500h14M5 .5l-3 2 3 2M13 .5l3 2-3 2"/><text class="ay" x="1" y="18">a</text><text class="yy" x="13" y="18">y</text></svg></button>
        <button aria-label="Distribute top edges"><svg width="25" height="25"><path class="o" d="M8.500 1.500h8v4h-8zM10.500 9.500h8v3h-8zM7.500 18.500h17v5h-17z"/><path class="r" d="M1 .5h14M1 9.500h16M1 18.500h14"/><path class="k" d="M2.500 2v16" stroke-dasharray="6 2"/></svg></button>
        <button aria-label="Distribute horizontal centers"><svg width="25" height="25"><path class="o" d="M10.500 1.500h12v4h-12zM7.500 9.500h17v6h-17zM8.500 18.500h8v5h-8z"/><path class="r" d="M1 3.500h14M1 12.500h16M1 21.500h14"/><path class="k" d="M2.500 4v17" stroke-dasharray="6 2"/></svg></button>
        <button aria-label="Distribute bottom edges"><svg width="25" height="25"><path class="o" d="M8.500 1.500h8v4h-8zM10.500 11.500h8v3h-8zM7.500 18.500h17v5h-17z"/><path class="r" d="M1 5.500h16M1 14.500h17M1 23.500h14"/><path class="k" d="M2.500 6v17" stroke-dasharray="6 2"/></svg></button>
        <button aria-label="Equal vertical gaps"><svg width="25" height="25"><path class="o" d="M7.500 1.500h17v3h-17zM9.500 11.500h9v3h-9zM7.500 21.500h16v3h-16z"/><path class="r" d="M1 4.500h20M1 11.500h10M1 14.500h10M1 21.500h14"/><path class="k" d="M2.500 5v6M2.500 15v6"/></svg></button>
        <button aria-label="Distribute text vertically"><svg width="25" height="25"><path class="r" d="M1 10.500h24"/><text class="yy" x="12" y="9">y</text><text class="ay" x="13" y="24">a</text></svg></button>
      </div>
      <div class="section-name">Rearrange</div>
    </div>
    <div class="bar bar-v"><button class="mt-1" aria-label="Scroll dock up"><svg width="9" height="9" color="#aaa"><use href="#arr-u"/></svg></button><i style="flex:430"></i><span style="flex:127"></span><button aria-label="Scroll dock down"><svg width="9" height="9"><use href="#arr-d"/></svg></button></div>
  </aside>

  <div class="commands d-flex flex-column align-items-center overflow-hidden" role="toolbar">
    <button class="tb" aria-label="New"><svg width="16" height="16"><path d="M1.500.5h9l4 4v11h-13z" fill="url(#gg)" stroke="#888"/><path d="M10.500.5v4h4" fill="#fff" stroke="#888"/></svg></button>
    <button class="tb" aria-label="Open"><svg width="16" height="16"><path d="M1.500 13.500v-11h5l1 2h6v3" fill="#c9d1ab" stroke="#7d8662"/><path d="M.5 7.500h15v6h-15z" fill="#dce3c3" stroke="#7d8662"/></svg></button>
    <button class="tb" aria-label="Save"><svg width="16" height="16"><path d="M.5.5h15v15H.5z" fill="#3a67ad" stroke="#123"/><path d="M2 1h12v7H2z" fill="#fff"/><path d="M2 1h12v3H2z" fill="#e01818"/><path d="M4 10h8v5H4z" fill="#ddd"/><path d="M6 11h2v4H6z" fill="#234"/></svg></button>
    <button class="tb" aria-label="Print"><svg width="16" height="16"><path d="M3.500.5h9v8h-9z" fill="#eee" stroke="#666"/><path d="M5 3.500h6M5 5.500h6" stroke="#777"/><path d="M.5 8.500h15v4H.5z" fill="#ddd" stroke="#444"/><path d="M2.500 12.500h11v3h-11z" fill="#fff" stroke="#555"/></svg></button>
    <span class="hsep"></span>
    <button class="tb" aria-label="Import"><svg width="16" height="16"><path d="M4.500.5h7l4 4v11h-11z" fill="#e4e4e0" stroke="#000"/><path d="M11.500.5v4h4" fill="#fff" stroke="#000"/><path d="M0 8.500h8" class="k"/><path d="M7 5.500l4 3-4 3z"/></svg></button>
    <button class="tb" aria-label="Export"><svg width="16" height="16"><path d="M.5.5h8l4 4v11H.5z" fill="#e4e4e0" stroke="#000"/><path d="M8.500.5v4h4" fill="#fff" stroke="#000"/><path d="M6 8.500h8" class="k"/><path d="M12 5.500l4 3-4 3z"/></svg></button>
    <span class="hsep"></span>
    <button class="tb" aria-label="Undo"><svg width="16" height="16"><use href="#docx"/></svg></button>
    <button class="tb" aria-label="Redo"><svg width="16" height="16"><use href="#docx"/></svg></button>
    <span class="hsep"></span>
    <button class="tb" aria-label="Copy"><svg width="16" height="16" fill="#f6f6f6" stroke="#999"><path d="M.5.5h9v11h-9z"/><path d="M5.500 4.500h7l3 3v8h-10z"/><path d="M7 9.500h6M7 12.500h6"/></svg></button>
    <button class="tb" aria-label="Cut"><svg width="16" height="16"><path d="M3 0l7 10M13 0L6 10" stroke="#777" stroke-width="2"/><path d="M1.500 10h4v4.500h-4zM10.500 10h4v4.500h-4z" fill="#fff" stroke="#c98a11" stroke-width="2.500"/></svg></button>
    <button class="tb" aria-label="Paste"><svg width="16" height="16"><path d="M1.500 1.500h13v14h-13z" fill="#c9933c" stroke="#5d3c07"/><path d="M4 4h8v9H4z" fill="#fff"/><path d="M5 .5h6v3H5z" fill="#bbb" stroke="#555"/><path d="M5 6.500h6M5 8.500h6M5 10.500h6" stroke="#999"/></svg></button>
    <span class="hsep"></span>
    <button class="tb" aria-label="Zoom selection"><svg width="18" height="18"><use href="#lens"/><path d="M4.500 5.500h7v5h-7z" fill="#fff" stroke="#000" stroke-dasharray="1 1"/></svg></button>
    <button class="tb" aria-label="Zoom drawing"><svg width="18" height="18"><use href="#lens"/><path d="M4.500 4.500h5v5h-5z" fill="#ffe890" stroke="#333"/><path d="M7.500 6.500h5v5h-5z" fill="#ffe890" stroke="#333"/></svg></button>
    <button class="tb" aria-label="Zoom page"><svg width="18" height="18"><use href="#lens"/><path d="M5.500 4.500h6v8h-6z" fill="#fff" stroke="#222"/></svg></button>
    <span class="hsep"></span>
    <button class="tb" aria-label="Duplicate"><svg width="16" height="16"><path class="o" d="M.5.5h10v10H.5z"/><path class="o" d="M4.500 4.500h11v11h-11z"/></svg></button>
    <button class="tb" aria-label="Clone"><svg width="16" height="16"><path class="o" d="M.5.5h10v10H.5z"/><path class="o" d="M4.500 4.500h11v11h-11z"/><path d="M6.500 9.500h7v4h-7zM8 9V7h4v2" fill="#ffeaa0" stroke="#222"/></svg></button>
    <button class="tb" aria-label="Unlink clone"><svg width="16" height="16"><path class="o" d="M.5.5h10v10H.5z"/><path class="o" d="M4.500 4.500h11v11h-11z"/><path d="M6.500 9.500h7v4h-7zM9 7h4v2" fill="#cfeecb" stroke="#222"/></svg></button>
    <span class="hsep"></span>
    <button class="tb" aria-label="Group"><svg width="16" height="16"><path class="o" d="M2.500 6.500h8v7h-8z"/><circle class="o" cx="10" cy="6" r="4"/><path d="M0 0h2v2H0zM14 0h2v2h-2zM0 14h2v2H0zM14 14h2v2h-2z"/></svg></button>
    <button class="chev mt-auto mb-1 pb-1" aria-label="More commands">»</button>
  </div>

  <div class="snaps d-flex flex-column align-items-center overflow-hidden" role="toolbar">
    <button class="tb on" aria-label="Enable snapping"><svg width="16" height="16"><use href="#nodes"/></svg></button>
    <span class="hsep"></span>
    <button class="tb" aria-label="Snap bounding box"><svg width="16" height="16"><use href="#nodes"/></svg></button>
    <button class="tb" aria-label="Snap box edges"><svg width="16" height="16"><path d="M0 13.500h13.500V0" fill="none" stroke="#777" stroke-dasharray="2 1"/></svg></button>
    <button class="tb" aria-label="Snap box corners"><svg width="16" height="16"><path d="M0 13.500h13.500V0" fill="none" stroke="#777" stroke-dasharray="2 1"/><circle cx="13" cy="13" r="2.500" fill="#9ab5a5" stroke="#566"/></svg></button>
    <button class="tb" aria-label="Snap edge midpoints"><svg width="16" height="16"><path d="M0 13.500h12.500V0" fill="none" stroke="#777" stroke-dasharray="2 1"/><circle cx="12.500" cy="4" r="2" fill="#9ab5a5" stroke="#566"/></svg></button>
    <button class="tb" aria-label="Snap box centers"><svg width="16" height="16"><path d="M0 13.500h12.500V0" fill="none" stroke="#777" stroke-dasharray="2 1"/><circle cx="4" cy="5" r="2" fill="#9cb" stroke="#566"/></svg></button>
    <span class="hsep"></span>
    <button class="tb on" aria-label="Snap nodes"><svg width="16" height="16"><use href="#nodes"/></svg></button>
    <button class="tb" aria-label="Snap paths"><svg width="16" height="16"><path d="M1 2c10 0 12 4 9 12M15 6c0 5-2 8-5 8" fill="none" stroke="#2c8a47" stroke-width="1.500"/></svg></button>
    <button class="tb" aria-label="Snap intersections"><svg width="16" height="16"><path d="M1 12L15 4M3 13L14 1" stroke="#666" stroke-width="1.300"/><circle cx="8" cy="8" r="2" fill="#3a8a58"/></svg></button>
    <button class="tb" aria-label="Snap cusp nodes"><svg width="16" height="16"><path d="M1 1c8 0 12 5 8 12M15 6c0 5-2 7-6 7" fill="none" stroke="#777" stroke-width="1.300"/><circle cx="8" cy="13" r="2" fill="#4b9b6a" stroke="#275"/></svg></button>
    <button class="tb" aria-label="Snap smooth nodes"><svg width="16" height="16"><path d="M1 3c8-1 9 3 9 11 3 1 4-3 4-6" fill="none" stroke="#777" stroke-width="1.300"/><path d="M6 3h4v4H6z" fill="#4b9b6a" stroke="#275"/></svg></button>
    <button class="tb" aria-label="Snap midpoints"><svg width="16" height="16"><path d="M0 15L16 1" stroke="#844"/><path d="M1 10l3 5M4 9l2 5M10 3l2 5M12 1l3 5" stroke="#c34" stroke-width="1.500"/><circle cx="8" cy="8" r="2" fill="#4b9b6a"/></svg></button>
    <span class="hsep"></span>
    <button class="tb on" aria-label="Snap others"><svg width="16" height="16"><use href="#nodes"/></svg></button>
    <button class="tb" aria-label="Snap object centers"><svg width="16" height="16"><path d="M0 13.500h12.500V1" fill="none" stroke="#888"/><circle cx="5" cy="6" r="2" fill="#6b8" stroke="#275"/></svg></button>
    <button class="tb" aria-label="Snap rotation center"><svg width="16" height="16"><path d="M0 14.500h12.500V0" fill="none" stroke="#555" stroke-dasharray="2 1"/><path d="M2 7.500h6M5 5v6" stroke="#222"/></svg></button>
    <button class="tb" aria-label="Snap text baseline"><svg width="16" height="16"><text x="3" y="14" style="font:bold 17px 'DejaVu Sans'">A</text><circle cx="3" cy="13.500" r="2" fill="#6b8" stroke="#275"/></svg></button>
    <span class="hsep"></span>
    <button class="tb" aria-label="Snap page border"><svg width="16" height="16"><path d="M2.500 1.500h11v13h-11z" fill="url(#gg)" stroke="#333"/></svg></button>
    <button class="tb on" aria-label="Snap grids"><svg width="16" height="16"><path d="M0 2.500h16M0 6.500h16M0 10.500h16M0 14.500h16M2.500 0v16M6.500 0v16M10.500 0v16M14.500 0v16" stroke="#1414d8"/></svg></button>
    <button class="tb on" aria-label="Snap guides"><svg width="16" height="16"><path d="M1.500 0v16M14.500 0v16M5 16L11 0" stroke="#2222e8" stroke-width="1.200"/></svg></button>
  </div>
</main>

<div class="palette d-flex flex-shrink-0">
  <div id="swatches" class="d-flex overflow-hidden flex-grow-1"></div>
  <svg width="9" height="10"><path d="M6 1v8L2 5z"/></svg>
</div>
<div class="bar palette-bar flex-shrink-0"><button aria-label="Palette left"><svg width="9" height="9"><use href="#arr-l"/></svg></button><span style="flex:90"></span><i style="flex:295"></i><span style="flex:943"></span><button aria-label="Palette right"><svg width="9" height="9"><use href="#arr-r"/></svg></button></div>

<footer class="status d-flex align-items-center flex-shrink-0">
  <div class="fs-rows d-flex"><div class="fs-name">Fill:<br>Stroke:</div><div class="fs-value">N/A<br>N/A</div></div>
  <label for="ob">O:</label><input id="ob" class="num opacity-field" value="0" disabled><span class="spin"><button aria-label="Up"></button><button aria-label="Down"></button></span>
  <span class="vsep h-100 mx-1"></span>
  <svg width="12" height="10" viewBox="0 0 12 10"><path d="M0 6c3-5 9-5 12 0-3 4-9 4-12 0z" fill="#444"/><circle cx="6" cy="6" r="1.500" fill="#fff"/><path d="M2 3L1 1M5 2V0M8 2l1-2" stroke="#444"/></svg>
  <svg class="ms-1" width="12" height="12"><use href="#lock"/></svg>
  <select class="combo layer fw-bold" aria-label="Layer"><option>▪Layer 1</option></select>
  <span class="ms-1 text-truncate">No objects selected. Click, Shift+click, Alt+scroll mouse on top of objects, or drag around objects to select.</span>
  <div class="fs-rows d-flex ms-auto ps-1 border-start border-secondary"><div>X:<br>Y:</div><div class="mono text-end ms-2">282.00<br>656.00</div></div>
  <label for="zm" class="ms-2 me-1">Z:</label><input id="zm" class="num" value="100%"><span class="spin live"><button aria-label="Up"></button><button aria-label="Down"></button></span>
  <svg class="align-self-end ms-1" width="12" height="12" fill="#bbb"><path d="M8 0h2v2H8zM4 4h2v2H4zM8 4h2v2H8zM0 8h2v2H0zM4 8h2v2H4zM8 8h2v2H8z"/></svg>
</footer>
<div class="task-edge flex-shrink-0 d-flex"><span style="flex:48"></span><i style="flex:344"></i><span style="flex:345"></span><i style="flex:48"></i><span style="flex:581"></span></div>

<svg class="pointer-arrow" width="136" height="66"><path d="M0 27h98L62 1h27l47 32-46 33H62l36-26H0z" fill="#f00"/></svg>

<script src="https://cdn.jsdelivr.net/npm/bootstrap@5.3.0/dist/js/bootstrap.bundle.min.js"></script>
<script>
  const palette = `800000 aa0000 d40000 ff0000 ff2a2a ff5555 ff8080 ffaaaa ffd5d5
    280b0b 501616 782121 a02c2c c83737 d35f5f de8787 e9afaf f4d7d7
    241c1c 483737 6c5353 916f6f ac9393 c8b7b7 e3dbdb
    2b1100 552200 803300 aa4400 d45500 ff6600 ff7f2a ff9955 ffb380 ffccaa ffe6d5
    28170b 502d16 784421 a05a2c c87137 d38d5f deaa87 e9c6af f4e3d7
    241f1c 483e37 6c5d53 917c6f ac9d93 c8beb7 e3dedb
    2b2200 554400 806600 aa8800 d4aa00 ffcc00 ffd42a ffdd55 ffe680 ffeeaa fff6d5
    28220b 504416 786721 a0892c c8ab37 d3bc5f decd87 e9ddaf f4eed7
    24221c 484537 6c6753 918a6f aca793 c8c4b7 e3e2db
    222b00 445500 668000 88aa00 aad400 ccff00 d4ff2a ddff55 e5ff80 eeffaa f6ffd5
    22280b 445016 677821 89a02c abc837 bcd35f cdde87`.split(/\s+/);
  document.getElementById('swatches').innerHTML = palette
    .map(c => `<button style="background:#${c}" aria-label="#${c}"></button>`).join('');

  let h = '', v = '';
  for (let n = -200; n <= 600; n += 100) h += `<text x="${n + 243}" y="11">${n}</text>`;
  for (let n = 800; n >= 300; n -= 100)
    [...String(n)].forEach((d, i) => v += `<text x="4" y="${808 - n + i * 8}">${d}</text>`);
  document.getElementById('hlabels').innerHTML = h;
  document.getElementById('vlabels').innerHTML = v;
</script>
</body>
</html>
